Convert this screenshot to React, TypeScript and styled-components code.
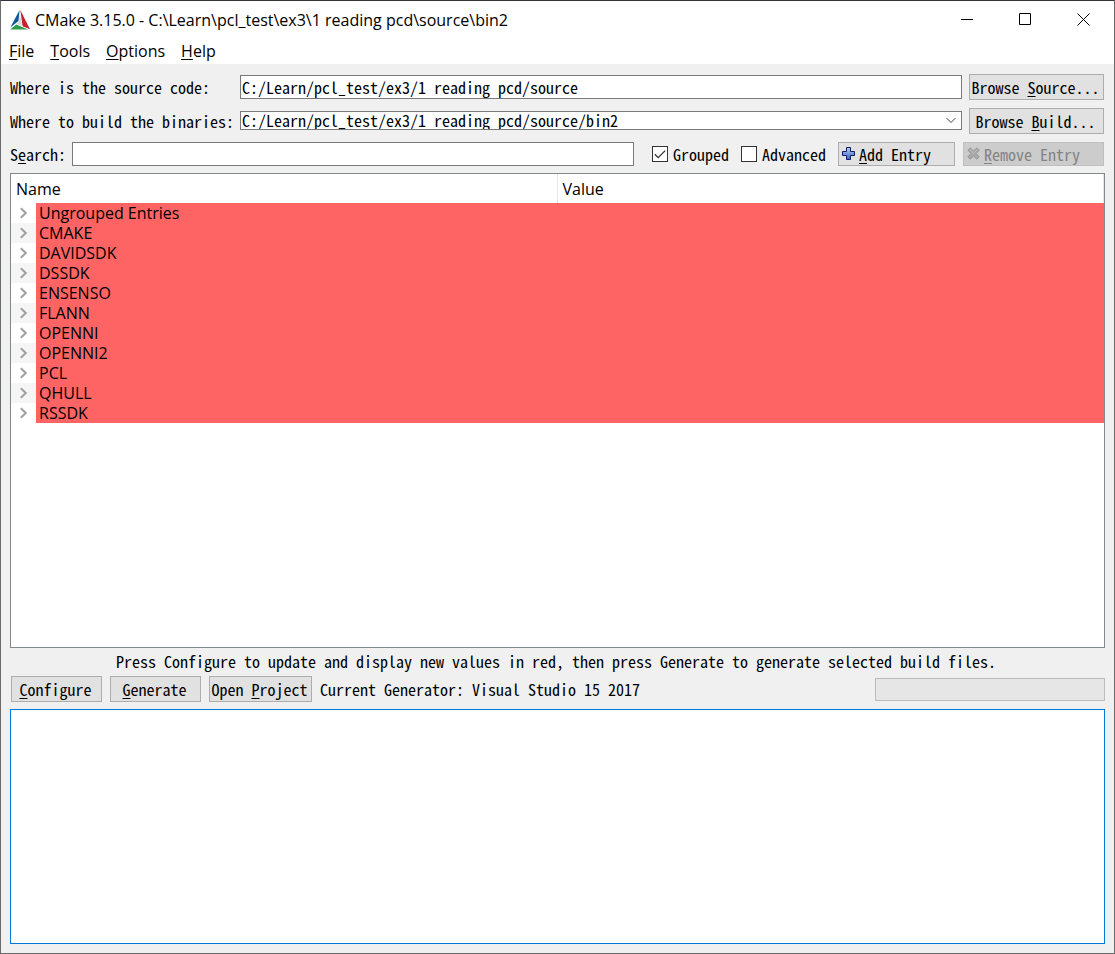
import React from "react";
import styled, { createGlobalStyle } from "styled-components";

const uiFont = `"Open Sans", "Noto Sans", sans-serif`;
const monoFont = `"Noto Sans Mono CJK SC", "Liberation Mono", monospace`;

const GlobalStyle = createGlobalStyle`
  * { box-sizing: border-box; }
  body { margin: 0; background: #f0f0f0; }
  button, input, select, textarea { font: inherit; color: inherit; border-radius: 0; margin: 0; }
  u { text-decoration: underline; text-decoration-thickness: 1px; text-underline-offset: 2px; }
`;

const Window = styled.div`
  display: flex;
  flex-direction: column;
  min-height: 100vh;
  border: 1px solid #6b6b6b;
  border-top-color: #35343b;
  background: #f0f0f0;
  color: #000;
  font-family: ${monoFont};
  font-size: 16px;
  line-height: 20px;
`;

const TitleBar = styled.header`
  display: flex;
  align-items: center;
  height: 37px;
  padding: 0 2px 0 8px;
  background: #fff;
  font-family: ${uiFont};
`;

const Title = styled.h1`
  flex: 1;
  margin: 0 0 0 4px;
  font-size: 16px;
  font-weight: 400;
  line-height: 20px;
`;

const CaptionButton = styled.button`
  display: flex;
  align-items: center;
  justify-content: center;
  width: 58px;
  height: 37px;
  padding: 0;
  border: 0;
  background: none;
`;

const MenuBar = styled.nav`
  display: flex;
  gap: 16px;
  height: 26px;
  padding: 3px 8px;
  background: #fff;
  font-family: ${uiFont};
`;

const MenuButton = styled.button`
  padding: 0;
  border: 0;
  background: none;
  line-height: 20px;
`;

const Content = styled.main`
  flex: 1;
  display: flex;
  flex-direction: column;
  padding: 10px 9px 9px;
`;

const Paths = styled.div`
  display: grid;
  grid-template-columns: 223px 1fr 135px;
  align-items: center;
  gap: 8px 7px;
  padding-right: 1px;
`;

const FieldLabel = styled.label`
  white-space: nowrap;
  line-height: 24px;
`;

const TextField = styled.input`
  width: 100%;
  min-width: 0;
  height: 24px;
  padding: 0 1px;
  border: 1px solid #7a7a7a;
  background: #fff;
  outline: 0;
`;

const ComboBox = styled.div`
  position: relative;
  display: flex;
  height: 19px;
  margin-bottom: 2px;
`;

const ComboSelect = styled.select`
  appearance: none;
  width: 100%;
  padding: 0 24px 0 1px;
  border: 1px solid #7a7a7a;
  background: #fff;
  line-height: 17px;
`;

const ComboArrow = styled.svg`
  position: absolute;
  top: 6px;
  right: 6px;
  pointer-events: none;
`;

const PushButton = styled.button<{ $width?: number; $height?: number }>`
  display: flex;
  align-items: center;
  justify-content: center;
  gap: 3px;
  width: ${(p) => (p.$width ? `${p.$width}px` : "100%")};
  height: ${(p) => p.$height ?? 26}px;
  padding: 0 2px 0 0;
  border: 1px solid #adadad;
  background: #e1e1e1;
  white-space: nowrap;
  line-height: 20px;

  &:disabled {
    border-color: #bfbfbf;
    background: #cccccc;
    color: #838383;
  }
`;

const EntryButton = styled(PushButton)`
  justify-content: flex-start;
  padding-left: 3px;
`;

const SearchRow = styled.div`
  display: flex;
  align-items: center;
  margin-top: 8px;
  padding-right: 1px;
`;

const SearchLabel = styled(FieldLabel)`
  width: 62px;
`;

const SearchField = styled(TextField)`
  flex: 1;
  margin-right: 18px;
`;

const CheckLabel = styled.label`
  position: relative;
  display: flex;
  align-items: center;
  gap: 5px;
  margin-right: 12px;
`;

const CheckInput = styled.input`
  appearance: none;
  width: 16px;
  height: 16px;
  border: 1px solid #333;
  background: #fff;

  & + svg {
    position: absolute;
    left: 0;
    visibility: hidden;
  }
  &:checked + svg {
    visibility: visible;
  }
`;

const EntryActions = styled.div`
  display: flex;
  gap: 8px;
`;

const TreePane = styled.section`
  flex: 1 1 475px;
  margin-top: 7px;
  border: 1px solid #828790;
  background: #fff;
  font-family: ${uiFont};
`;

const Tree = styled.table`
  width: 100%;
  table-layout: fixed;
  border-collapse: separate;
  border-spacing: 0;
`;

const HeadCell = styled.th`
  width: 50%;
  height: 29px;
  padding: 1px 5px 0;
  border-right: 1px solid #e5e5e5;
  text-align: left;
  font-weight: 400;
`;

const TreeRow = styled.tr`
  height: 20px;
  background: #fff;

  &:nth-child(even) {
    background: #f5f5f5;
  }
`;

const NameCell = styled.td`
  padding: 0;
`;

const NameLine = styled.div`
  display: flex;
`;

const Expander = styled.button`
  display: flex;
  align-items: center;
  justify-content: center;
  width: 25px;
  height: 20px;
  padding: 0;
  border: 0;
  background: none;
`;

const EntryName = styled.span`
  flex: 1;
  padding-left: 3px;
  background: #ff6464;
`;

const ValueCell = styled.td`
  padding: 0;
  background: #ff6464;
`;

const Hint = styled.p`
  margin: 3px 0 5px;
  padding-right: 3px;
  text-align: center;
`;

const ActionRow = styled.div`
  display: flex;
  align-items: center;
  gap: 8px;
  padding-left: 1px;
`;

const Generator = styled.span`
  flex: 1;
  white-space: nowrap;
`;

const Progress = styled.div`
  width: 230px;
  height: 23px;
  border: 1px solid #bcbcbc;
  background: #e6e6e6;
`;

const Output = styled.textarea`
  flex: 1 1 235px;
  width: 100%;
  margin-top: 7px;
  padding: 4px;
  border: 1px solid #0078d7;
  background: #fff;
  resize: none;
  outline: 0;
`;

const menus = ["File", "Tools", "Options", "Help"];

const entries = [
  "Ungrouped Entries",
  "CMAKE",
  "DAVIDSDK",
  "DSSDK",
  "ENSENSO",
  "FLANN",
  "OPENNI",
  "OPENNI2",
  "PCL",
  "QHULL",
  "RSSDK",
];

function CMakeLogo() {
  return (
    <svg width="22" height="22" viewBox="0 0 22 22" aria-hidden="true">
      <path d="M10.6 1 1.3 18.6 9.5 12Z" fill="#0f5a9c" />
      <path d="M11.3 1 21 20.2 13.6 17.2Z" fill="#c8202f" />
      <path d="M1.2 20.4 7.2 15.4 19 20.4Z" fill="#2b9c48" />
      <path d="M11 5 9.8 12.6 7.6 14.9 12.9 16.8Z" fill="#d5d8dc" />
    </svg>
  );
}

function PlusIcon() {
  return (
    <svg width="14" height="14" viewBox="0 0 14 14" aria-hidden="true">
      <defs>
        <linearGradient id="plus" x1="0" y1="0" x2="0" y2="1">
          <stop offset="0" stopColor="#b4cdf5" />
          <stop offset="1" stopColor="#3a62c4" />
        </linearGradient>
      </defs>
      <path
        d="M4.5.5h4v4h4v4h-4v4h-4v-4h-4v-4h4z"
        fill="url(#plus)"
        stroke="#0c1c66"
        strokeLinejoin="round"
      />
    </svg>
  );
}

function CrossIcon() {
  return (
    <svg width="14" height="14" viewBox="0 0 14 14" aria-hidden="true">
      <path
        d="M3.3 1 6.5 4 9.7 1 12.2 3.2 9.2 6.5 12.2 9.8 9.8 12.2 6.5 9.2 3.2 12.2.9 9.8 3.9 6.5.9 3.2Z"
        fill="#a9a9a9"
        stroke="#989898"
        strokeLinejoin="round"
      />
      <path d="M3 3 6.5 6.3 10 3" fill="none" stroke="#bebebe" />
    </svg>
  );
}

function Tick() {
  return (
    <svg width="16" height="16" viewBox="0 0 16 16" aria-hidden="true">
      <path d="m2.8 8.2 3.4 3.4 7-7" fill="none" stroke="#333" strokeWidth="1.3" />
    </svg>
  );
}

export default function App() {
  return (
    <>
      <GlobalStyle />
      <Window>
        <TitleBar>
          <CMakeLogo />
          <Title>{"CMake 3.15.0 - C:\\Learn\\pcl_test\\ex3\\1 reading pcd\\source\\bin2"}</Title>
          <CaptionButton aria-label="Minimize">
            <svg width="13" height="13" viewBox="0 0 13 13">
              <path d="M0 6.5h12" stroke="#000" />
            </svg>
          </CaptionButton>
          <CaptionButton aria-label="Maximize">
            <svg width="13" height="13" viewBox="0 0 13 13">
              <path d="M.5.5h11v11H.5z" fill="none" stroke="#000" />
            </svg>
          </CaptionButton>
          <CaptionButton aria-label="Close">
            <svg width="13" height="13" viewBox="0 0 13 13">
              <path d="m.5.5 12 12m0-12-12 12" stroke="#000" />
            </svg>
          </CaptionButton>
        </TitleBar>
        <MenuBar>
          {menus.map((menu) => (
            <MenuButton key={menu}>
              <u>{menu[0]}</u>
              {menu.slice(1)}
            </MenuButton>
          ))}
        </MenuBar>
        <Content>
          <Paths>
            <FieldLabel htmlFor="source">Where is the source code:</FieldLabel>
            <TextField id="source" defaultValue="C:/Learn/pcl_test/ex3/1 reading pcd/source" />
            <PushButton>
              <span>Browse <u>S</u>ource...</span>
            </PushButton>
            <FieldLabel htmlFor="build">Where to build the binaries:</FieldLabel>
            <ComboBox>
              <ComboSelect id="build">
                <option>C:/Learn/pcl_test/ex3/1 reading pcd/source/bin2</option>
              </ComboSelect>
              <ComboArrow width="10" height="7" viewBox="0 0 10 7" aria-hidden="true">
                <path d="m.5 1 4.5 4.5L9.5 1" fill="none" stroke="#444" />
              </ComboArrow>
            </ComboBox>
            <PushButton>
              <span>Browse <u>B</u>uild...</span>
            </PushButton>
          </Paths>
          <SearchRow>
            <SearchLabel htmlFor="search">S<u>e</u>arch:</SearchLabel>
            <SearchField id="search" />
            <CheckLabel>
              <CheckInput type="checkbox" defaultChecked />
              <Tick />
              Grouped
            </CheckLabel>
            <CheckLabel>
              <CheckInput type="checkbox" />
              <Tick />
              Advanced
            </CheckLabel>
            <EntryActions>
              <EntryButton $width={117} $height={24}>
                <PlusIcon />
                <span><u>A</u>dd Entry</span>
              </EntryButton>
              <EntryButton $width={141} $height={24} disabled>
                <CrossIcon />
                <span><u>R</u>emove Entry</span>
              </EntryButton>
            </EntryActions>
          </SearchRow>
          <TreePane>
            <Tree>
              <thead>
                <tr>
                  <HeadCell>Name</HeadCell>
                  <HeadCell>Value</HeadCell>
                </tr>
              </thead>
              <tbody>
                {entries.map((entry) => (
                  <TreeRow key={entry}>
                    <NameCell>
                      <NameLine>
                        <Expander aria-label={`Expand ${entry}`}>
                          <svg width="8" height="12" viewBox="0 0 8 12">
                            <path d="m.8 1.2 5 4.8-5 4.8" fill="none" stroke="#a0a0a0" strokeWidth="2" />
                          </svg>
                        </Expander>
                        <EntryName>{entry}</EntryName>
                      </NameLine>
                    </NameCell>
                    <ValueCell />
                  </TreeRow>
                ))}
              </tbody>
            </Tree>
          </TreePane>
          <Hint>
            Press Configure to update and display new values in red, then press Generate to generate
            selected build files.
          </Hint>
          <ActionRow>
            <PushButton $width={91}>
              <span><u>C</u>onfigure</span>
            </PushButton>
            <PushButton $width={91}>
              <span><u>G</u>enerate</span>
            </PushButton>
            <PushButton $width={103}>
              <span>Open <u>P</u>roject</span>
            </PushButton>
            <Generator>Current Generator: Visual Studio 15 2017</Generator>
            <Progress role="progressbar" aria-label="Progress" />
          </ActionRow>
          <Output aria-label="Output" readOnly />
        </Content>
      </Window>
    </>
  );
}
